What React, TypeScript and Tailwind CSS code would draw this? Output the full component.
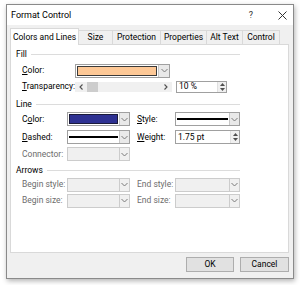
import React from 'react';

const FONT = { fontFamily: 'Roboto, "Liberation Sans", sans-serif' };

function Chevron() {
  return (
    <svg width="7" height="5" viewBox="0 0 7 5">
      <polyline points="0.5,1 3.5,4 6.5,1" fill="none" stroke="#7a7a7a" strokeWidth="1" />
    </svg>
  );
}

function ScrollArrow({ dir }: { dir: 'left' | 'right' }) {
  return (
    <svg width="4" height="6" viewBox="0 0 4 6">
      <polyline
        points={dir === 'left' ? '3.5,0.5 1,3 3.5,5.5' : '0.5,0.5 3,3 0.5,5.5'}
        fill="none"
        stroke="#505050"
        strokeWidth="1.1"
      />
    </svg>
  );
}

function Spinner() {
  return (
    <div className="w-[9px] h-full flex flex-col items-center justify-center gap-[2px] bg-[#f0f0f0] border-l border-[#e0e0e0]">
      <svg width="5" height="3" viewBox="0 0 5 3">
        <polygon points="0,3 2.5,0 5,3" fill="#505050" />
      </svg>
      <svg width="5" height="3" viewBox="0 0 5 3">
        <polygon points="0,0 2.5,3 5,0" fill="#505050" />
      </svg>
    </div>
  );
}

function Combo({
  width,
  disabled,
  children,
}: {
  width: string;
  disabled?: boolean;
  children?: React.ReactNode;
}) {
  return (
    <div
      className={`${width} h-[14px] flex border ${
        disabled ? 'border-[#cccccc] bg-[#f0f0f0]' : 'border-[#a0a0a0] bg-white'
      }`}
    >
      <div className="flex-1 flex items-center px-[1px]">{children}</div>
      <div
        className={`w-[10px] flex items-center justify-center border-l ${
          disabled ? 'border-[#cccccc] bg-[#f0f0f0]' : 'border-[#c8c8c8] bg-[#e9e9e9]'
        }`}
      >
        <Chevron />
      </div>
    </div>
  );
}

function Label({
  text,
  u,
  disabled,
  width,
}: {
  text: string;
  u?: number;
  disabled?: boolean;
  width: string;
}) {
  return (
    <span className={`${width} shrink-0 whitespace-nowrap ${disabled ? 'text-[#6d6d6d]' : 'text-black'}`}>
      {u === undefined ? (
        text
      ) : (
        <>
          {text.slice(0, u)}
          <span className="underline underline-offset-1">{text[u]}</span>
          {text.slice(u + 1)}
        </>
      )}
    </span>
  );
}

function Section({ title }: { title: string }) {
  return (
    <div className="flex items-center gap-[4px] w-[224px] h-[14px]">
      <span className="text-black">{title}</span>
      <div className="flex-1 h-px bg-[#dcdcdc]" />
    </div>
  );
}

export default function App() {
  const tabs = [
    { label: 'Size', w: 'w-[34px]' },
    { label: 'Protection', w: 'w-[48px]' },
    { label: 'Properties', w: 'w-[46px]' },
    { label: 'Alt Text', w: 'w-[36px]' },
    { label: 'Control', w: 'w-[37px]' },
  ];

  return (
    <div className="w-[300px] h-[285px] bg-white pt-[4px] pl-[6px] text-[8.5px] leading-none whitespace-nowrap" style={FONT}>
      <div className="w-[288px] h-[275px] bg-[#f0f0f0] border border-[#8a8a8a] shadow-[1px_2px_5px_rgba(0,0,0,0.3)] flex flex-col">
        {/* Title bar */}
        <div className="h-[20px] bg-white flex items-center pl-[4px] pr-[6px]">
          <span className="text-[9px] text-black flex-1">Format Control</span>
          <span className="text-[9px] text-[#333] mr-[25px]">?</span>
          <svg width="9" height="9" viewBox="0 0 9 9">
            <path d="M0.5 0.5 L8.5 8.5 M8.5 0.5 L0.5 8.5" stroke="#333" strokeWidth="1" />
          </svg>
        </div>

        {/* Tabs */}
        <div className="pl-[3px] pt-[3px] flex items-end h-[19px]">
          <div className="w-[69px] h-[17px] bg-white border border-b-0 border-[#d9d9d9] flex items-center justify-center relative top-px">
            Colors and Lines
          </div>
          {tabs.map((t) => (
            <div
              key={t.label}
              className={`${t.w} h-[14px] border border-l-0 border-b-0 border-[#d9d9d9] bg-[#f0f0f0] flex items-center justify-center`}
            >
              {t.label}
            </div>
          ))}
        </div>

        {/* Panel */}
        <div className="ml-[3px] w-[279px] h-[209px] bg-white border border-[#d9d9d9] pl-[5px] pt-[2px] flex flex-col">
          <Section title="Fill" />
          <div className="flex items-center mt-[2px] pl-[6px] h-[15px]">
            <Label text="Color:" u={0} width="w-[53px]" />
            <div className="w-[95px] h-[14px] flex border border-[#a0a0a0] bg-white">
              <div className="flex-1 m-[1px] bg-[#fdc896] border border-[#3a3a3a]" />
              <div className="w-[11px] flex items-center justify-center border-l border-[#c8c8c8] bg-[#e9e9e9]">
                <Chevron />
              </div>
            </div>
          </div>
          <div className="flex items-center mt-[3px] pl-[6px] h-[11px]">
            <Label text="Transparency:" u={0} width="w-[53px]" />
            <div className="w-[97px] h-[10px] bg-[#f0f0f0] flex items-center">
              <span className="w-[12px] flex items-center justify-center">
                <ScrollArrow dir="left" />
              </span>
              <div className="w-[11px] h-full bg-[#cdcdcd]" />
              <div className="flex-1" />
              <span className="w-[12px] flex items-center justify-center">
                <ScrollArrow dir="right" />
              </span>
            </div>
            <div className="ml-[4px] w-[51px] h-[12px] flex border border-[#a0a0a0] bg-white">
              <span className="flex-1 flex items-center pl-[2px]">10 %</span>
              <Spinner />
            </div>
          </div>

          <div className="mt-[5px]">
            <Section title="Line" />
          </div>
          <div className="flex items-center mt-[1px] pl-[6px] h-[14px]">
            <Label text="Color:" u={1} width="w-[45px]" />
            <Combo width="w-[63px]">
              <div className="w-full h-[10px] bg-[#2e3192] border border-[#1a1a3a]" />
            </Combo>
            <Label text="Style:" u={0} width="w-[38px] ml-[7px]" />
            <Combo width="w-[65px]">
              <div className="w-full h-[2px] bg-black" />
            </Combo>
          </div>
          <div className="flex items-center mt-[4px] pl-[6px] h-[14px]">
            <Label text="Dashed:" u={0} width="w-[45px]" />
            <Combo width="w-[63px]">
              <div className="w-full h-[2px] bg-black" />
            </Combo>
            <Label text="Weight:" u={0} width="w-[38px] ml-[7px]" />
            <div className="w-[65px] h-[14px] flex border border-[#a0a0a0] bg-white">
              <span className="flex-1 flex items-center pl-[2px]">1.75 pt</span>
              <Spinner />
            </div>
          </div>
          <div className="flex items-center mt-[3px] pl-[6px] h-[14px]">
            <Label text="Connector:" disabled width="w-[45px]" />
            <Combo width="w-[63px]" disabled />
          </div>

          <div className="mt-[2px]">
            <Section title="Arrows" />
          </div>
          <div className="flex items-center mt-0 pl-[6px] h-[15px]">
            <Label text="Begin style:" disabled width="w-[45px]" />
            <Combo width="w-[63px]" disabled />
            <Label text="End style:" disabled width="w-[38px] ml-[7px]" />
            <Combo width="w-[65px]" disabled />
          </div>
          <div className="flex items-center mt-[1px] pl-[6px] h-[15px]">
            <Label text="Begin size:" disabled width="w-[45px]" />
            <Combo width="w-[63px]" disabled />
            <Label text="End size:" disabled width="w-[38px] ml-[7px]" />
            <Combo width="w-[65px]" disabled />
          </div>
        </div>

        {/* Footer */}
        <div className="flex justify-end gap-[6px] pr-[4px] mt-[4px]">
          <button className="w-[48px] h-[15px] bg-[#e1e1e1] border border-[#adadad] text-black flex items-center justify-center">
            OK
          </button>
          <button className="w-[49px] h-[15px] bg-[#e1e1e1] border border-[#adadad] text-black flex items-center justify-center">
            Cancel
          </button>
        </div>
      </div>
    </div>
  );
}
